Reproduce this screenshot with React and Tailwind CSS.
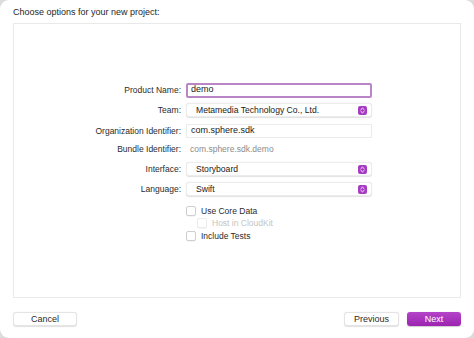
import React from 'react';

const FONT = { fontFamily: '"Liberation Sans", Arial, sans-serif' };

function Stepper() {
  return (
    <svg width="9" height="9" viewBox="0 0 9 9" className="shrink-0">
      <rect x="0" y="0" width="9" height="9" rx="2" fill="#a63cc2" />
      <path d="M2.9 3.6 L4.5 2.2 L6.1 3.6" fill="none" stroke="#fff" strokeWidth="0.9" strokeLinecap="round" strokeLinejoin="round" />
      <path d="M2.9 5.4 L4.5 6.8 L6.1 5.4" fill="none" stroke="#fff" strokeWidth="0.9" strokeLinecap="round" strokeLinejoin="round" />
    </svg>
  );
}

function Row({ label, className = '', children }) {
  return (
    <div className={`flex items-center h-[14px] ${className}`}>
      <div className="w-[168px] pr-[1px] text-right text-[8.5px] text-[#2b2b2b] leading-none">{label}</div>
      <div className="ml-[4px] w-[186px] h-full flex items-center">{children}</div>
    </div>
  );
}

function Popup({ value }) {
  return (
    <div className="w-full h-full flex items-center justify-between pl-[9px] pr-[4px] bg-white rounded-[3px] border border-[#ececec] shadow-[0_0.5px_1px_rgba(0,0,0,0.12)]">
      <span className="text-[8.6px] text-[#1a1a1a]">{value}</span>
      <Stepper />
    </div>
  );
}

function Check({ label, disabled, className = '' }) {
  return (
    <div className={`flex items-center h-[10px] ${className}`}>
      <div className={`w-[10px] h-[10px] rounded-[2px] bg-white border ${disabled ? 'border-[#ececec]' : 'border-[#cfcfcf]'} shadow-[0_0.5px_0.5px_rgba(0,0,0,0.08)]`} />
      <span className={`ml-[5px] text-[8.5px] leading-none ${disabled ? 'text-[#c4c4c4]' : 'text-[#2b2b2b]'}`}>{label}</span>
    </div>
  );
}

export default function App() {
  return (
    <div className="w-[474px] h-[338px] bg-[#dcdcdc]" style={FONT}>
      <div className="w-full h-full bg-white rounded-[9px] px-[13px] pt-[7px] flex flex-col">
        <div className="h-[11px] text-[9px] leading-[11px] text-[#262626]">Choose options for your new project:</div>
        <div className="mt-[5px] h-[275px] border border-[#e9e9e9] bg-white pt-[59px] flex flex-col">
          <Row label="Product Name:">
            <div className="w-full h-[15px] flex items-center px-[3px] border-2 border-[#b985c6] rounded-[2px] bg-white">
              <span className="text-[9px] text-[#1a1a1a]">demo</span>
            </div>
          </Row>
          <Row label="Team:" className="mt-[6px]">
            <Popup value="Metamedia Technology Co., Ltd." />
          </Row>
          <Row label="Organization Identifier:" className="mt-[7px]">
            <div className="w-full h-full flex items-center px-[4px] border border-[#ececec] bg-white">
              <span className="text-[9px] text-[#1a1a1a]">com.sphere.sdk</span>
            </div>
          </Row>
          <Row label="Bundle Identifier:" className="mt-[4px]">
            <span className="pl-[4px] text-[8.5px] text-[#8c8c8c]">com.sphere.sdk.demo</span>
          </Row>
          <Row label="Interface:" className="mt-[6px]">
            <Popup value="Storyboard" />
          </Row>
          <Row label="Language:" className="mt-[6px]">
            <Popup value="Swift" />
          </Row>
          <div className="pl-[172px] flex flex-col">
            <Check label="Use Core Data" className="mt-[10px]" />
            <Check label="Host in CloudKit" disabled className="mt-[2px] ml-[11px]" />
            <Check label="Include Tests" className="mt-[3px]" />
          </div>
        </div>
        <div className="mt-[14px] flex items-center">
          <button className="w-[64px] h-[14px] rounded-[3px] bg-white border border-[#e4e4e4] shadow-[0_0.5px_1px_rgba(0,0,0,0.12)] text-[9px] leading-none text-[#2b2b2b]">Cancel</button>
          <div className="flex-1" />
          <button className="w-[55px] h-[14px] rounded-[3px] bg-white border border-[#e4e4e4] shadow-[0_0.5px_1px_rgba(0,0,0,0.12)] text-[9px] leading-none text-[#2b2b2b]">Previous</button>
          <button className="ml-[8px] w-[54px] h-[14px] rounded-[3px] bg-gradient-to-b from-[#b444c9] to-[#9c22b0] text-[9px] leading-none text-white shadow-[0_0.5px_1px_rgba(0,0,0,0.2)]">Next</button>
        </div>
      </div>
    </div>
  );
}
